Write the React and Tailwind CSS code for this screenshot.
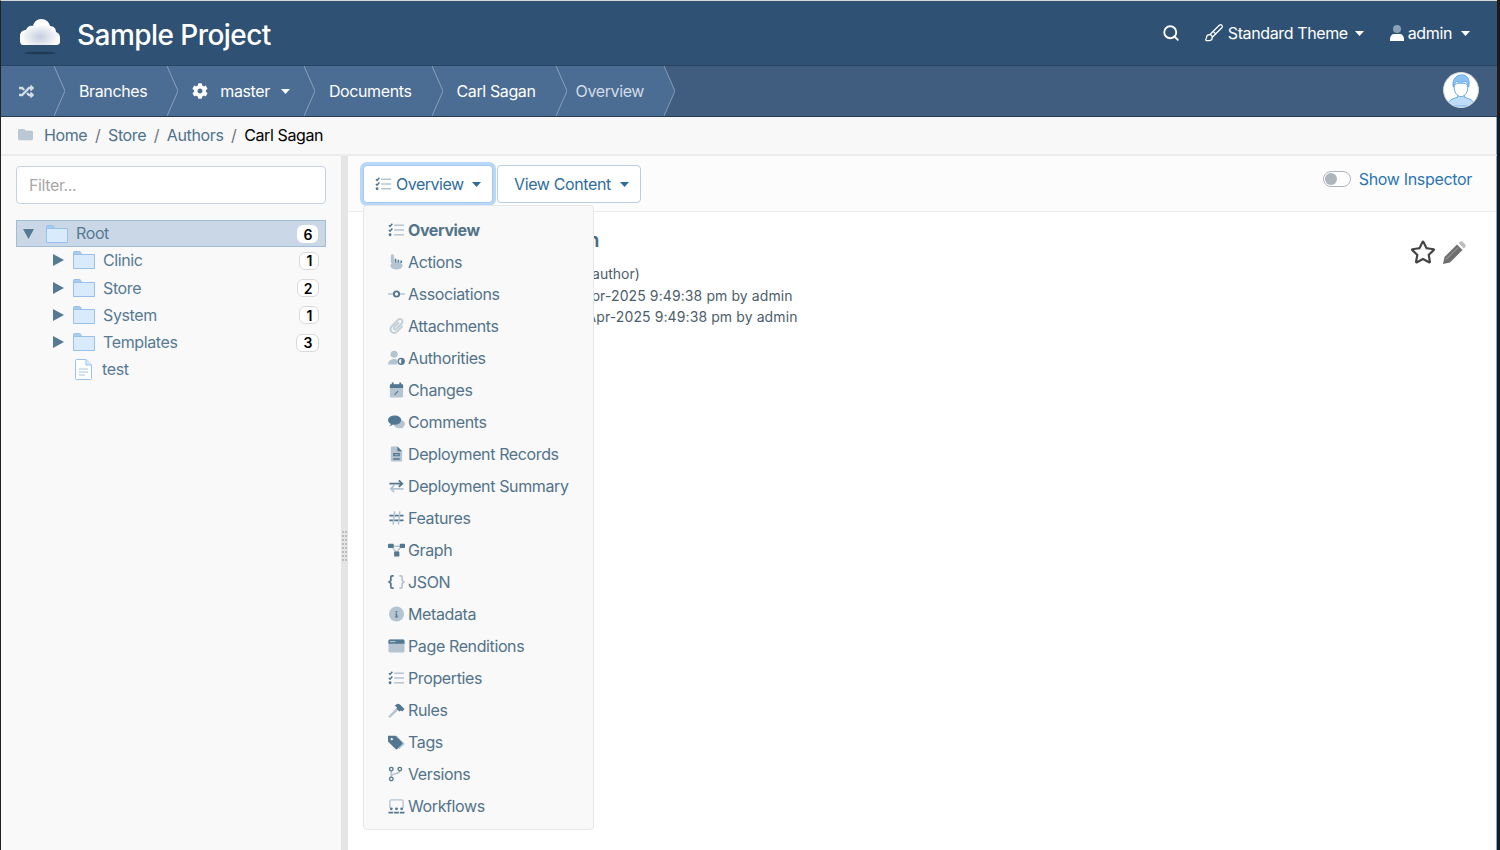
import React from 'react';
import { Search, Brush } from 'lucide-react';
import { FaRandom, FaCog, FaFolder, FaPaperclip, FaRegStar } from 'react-icons/fa';

const DARK = '#527790';
const LIGHT = '#b4c5d1';

// duotone menu icons, all on the same 18x16 box
const Duo = ({ children }) => (
    <svg viewBox="0 0 18 16" className="w-[17px] h-[16px] shrink-0" fill="none">
        {children}
    </svg>
);

const TasksIcon = () => (
    <Duo>
        <path d="M1 3l1.200 1.200L4.600 1.400M1 8l1.200 1.200 2.400-2.800" stroke={DARK} strokeWidth="1.600" />
        <circle cx="2.200" cy="13" r="1.500" fill={DARK} />
        <path d="M6.500 3H17M6.500 8H17M6.500 13H17" stroke={LIGHT} strokeWidth="1.600" />
    </Duo>
);

const icons = {
    tasks: <TasksIcon />,
    actions: (
        <Duo>
            <path d="M3 1.500c0-1.800 3.500-1.800 3.500 0V9H3z" fill={LIGHT} />
            <ellipse cx="9" cy="12" rx="6.500" ry="4" fill={LIGHT} />
            <path d="M8 4.500v4M11 5.500v3M14 6.500v2.500" stroke={DARK} strokeWidth="1.700" />
        </Duo>
    ),
    associations: (
        <Duo>
            <path d="M0 8h5.500M12.500 8H18" stroke={LIGHT} strokeWidth="1.600" />
            <circle cx="9" cy="8" r="2.800" stroke={DARK} strokeWidth="2" />
        </Duo>
    ),
    attachments: <FaPaperclip className="w-[17px] h-[16px] shrink-0 text-[#c3d0da]" />,
    authorities: (
        <Duo>
            <circle cx="6.500" cy="4" r="3.800" fill={LIGHT} />
            <path d="M0 15c0-3.500 2.500-6 6.500-6 1.500 0 2.700.4 3.500 1v5z" fill={LIGHT} />
            <circle cx="14" cy="11.500" r="3.200" stroke={DARK} strokeWidth="1.300" />
            <path d="M14 8.300a3.200 3.200 0 0 1 0 6.400z" fill={DARK} />
        </Duo>
    ),
    changes: (
        <Duo>
            <rect x="2" y="2" width="14" height="14" rx="1.500" fill={LIGHT} />
            <path d="M2 6V3.500C2 2.500 2.700 2 3.500 2h11c.8 0 1.500.5 1.500 1.500V6z" fill={DARK} />
            <path d="M5 0v3M13 0v3" stroke={DARK} strokeWidth="2" />
            <path d="M6.500 13.500l1-.3 3.500-3.500-.8-.8-3.500 3.500z" fill={DARK} />
        </Duo>
    ),
    comments: (
        <Duo>
            <ellipse cx="12" cy="10" rx="6" ry="4.500" fill={LIGHT} />
            <path d="M15 15.500l-2-2 3-1z" fill={LIGHT} />
            <ellipse cx="7" cy="6" rx="7" ry="5" fill={DARK} />
            <path d="M1.500 12.500l2-3 2 1.500z" fill={DARK} />
        </Duo>
    ),
    records: (
        <Duo>
            <path d="M3 1.500c0-.8.5-1.500 1.500-1.500H10l5 5v9.500c0 1-.6 1.500-1.500 1.500h-9C3.500 16 3 15.500 3 14.500z" fill={LIGHT} />
            <path d="M10 0l5 5h-5zM5.500 7h7v3.500h-7zM5.500 12.500h7V14h-7z" fill={DARK} />
            <rect x="7" y="8.300" width="4" height="1" fill={LIGHT} />
        </Duo>
    ),
    summary: (
        <Duo>
            <path d="M1.500 5.500H15M11.500 2L15 5.500 11.500 9" stroke={DARK} strokeWidth="2" />
            <path d="M16.500 11H3M6.500 7.500L3 11l3.500 3.500" stroke={LIGHT} strokeWidth="2" />
        </Duo>
    ),
    features: (
        <Duo>
            <path d="M1.500 5.500h15M1.500 10.500h15" stroke={DARK} strokeWidth="1.700" />
            <path d="M7 1L5.500 15M12.500 1L11 15" stroke={LIGHT} strokeWidth="1.700" />
        </Duo>
    ),
    graph: (
        <Duo>
            <path d="M4 4h10M4 4l5 7M14 4l-5 7" stroke={LIGHT} strokeWidth="1.500" />
            <rect x="0" y="1.500" width="6" height="4.500" rx=".8" fill={DARK} />
            <rect x="12.500" y="1.500" width="5.500" height="4.500" rx=".8" fill={DARK} />
            <rect x="6.500" y="9.500" width="5.500" height="5.500" rx=".5" fill={DARK} />
        </Duo>
    ),
    json: (
        <Duo>
            <path d="M6 1.500H4.500C3.500 1.500 3 2 3 3V6.500L1 8l2 1.500V13c0 1 .5 1.500 1.500 1.500H6" stroke={DARK} strokeWidth="1.800" />
            <path d="M12 1.500h1.500c1 0 1.500.5 1.500 1.500V6.500L17 8l-2 1.500V13c0 1-.5 1.500-1.500 1.500H12" stroke={LIGHT} strokeWidth="1.800" />
        </Duo>
    ),
    metadata: (
        <Duo>
            <circle cx="9" cy="8" r="8" fill={LIGHT} />
            <path d="M8 4.800h1.800v1.600H8zM7.500 7.500h2.300v3.200h.9v1.100H7.400v-1.100h.9V8.600h-.8z" fill={DARK} />
        </Duo>
    ),
    renditions: (
        <Duo>
            <rect x="0.500" y="1" width="17" height="14" rx="1.800" fill={LIGHT} />
            <path d="M.5 5.500V2.800C.5 1.700 1.200 1 2.300 1h13.400c1.100 0 1.800.7 1.800 1.800v2.700z" fill={DARK} />
            <rect x="2" y="2.700" width="6" height="1.200" fill={LIGHT} />
        </Duo>
    ),
    rules: (
        <Duo>
            <path d="M.5 14.500l8.500-8.500 2 2-8.500 8c-1 .5-2.500-.5-2-1.500z" fill={LIGHT} />
            <path d="M7 3.500L10 1.500c2 0 3.500 1 4.500 2.500l3 3-2.500 2.500-1.500-1-1.500 1-3-3 .5-1.500z" fill={DARK} />
        </Duo>
    ),
    tags: (
        <Duo>
            <path d="M9 1.500l8 7.500c.6.6.6 1.200 0 1.800l-5 4.700-1-1 4.500-4.500-8-8z" fill={LIGHT} />
            <path d="M0 1.500h8l7 7c.6.6.6 1.400 0 2l-5 5c-.6.6-1.400.6-2 0l-8-8z" fill={DARK} />
            <circle cx="4" cy="5" r="1.200" fill="#f9f9f9" />
        </Duo>
    ),
    versions: (
        <Duo>
            <path d="M3.500 4.500v7M12.500 4.500c0 4-9 2.500-9 6" stroke={LIGHT} strokeWidth="1.800" />
            <circle cx="3.500" cy="2.800" r="1.900" stroke={DARK} strokeWidth="1.400" />
            <circle cx="12.500" cy="2.800" r="1.900" stroke={DARK} strokeWidth="1.400" />
            <circle cx="3.500" cy="13.200" r="1.900" stroke={DARK} strokeWidth="1.400" />
        </Duo>
    ),
    workflows: (
        <Duo>
            <path d="M2 10V3c0-1 .6-1.500 1.500-1.500h11c.9 0 1.500.5 1.500 1.500v7" stroke={LIGHT} strokeWidth="1.500" />
            <circle cx="3.500" cy="11" r="1.500" fill={DARK} />
            <circle cx="9" cy="11" r="1.500" fill={DARK} />
            <circle cx="14.500" cy="11" r="1.500" fill={DARK} />
            <path d="M.5 15h5M6.500 15h5M12.500 15h5" stroke={DARK} strokeWidth="2" />
        </Duo>
    ),
};

const menuItems = [
    ['Overview', 'tasks'],
    ['Actions', 'actions'],
    ['Associations', 'associations'],
    ['Attachments', 'attachments'],
    ['Authorities', 'authorities'],
    ['Changes', 'changes'],
    ['Comments', 'comments'],
    ['Deployment Records', 'records'],
    ['Deployment Summary', 'summary'],
    ['Features', 'features'],
    ['Graph', 'graph'],
    ['JSON', 'json'],
    ['Metadata', 'metadata'],
    ['Page Renditions', 'renditions'],
    ['Properties', 'tasks'],
    ['Rules', 'rules'],
    ['Tags', 'tags'],
    ['Versions', 'versions'],
    ['Workflows', 'workflows'],
];

const treeRows = [
    ['Clinic', 1],
    ['Store', 2],
    ['System', 1],
    ['Templates', 3],
];

const Caret = ({ className }) => (
    <svg viewBox="0 0 9 5" className={`w-[9px] h-[5px] shrink-0 ${className}`} fill="currentColor">
        <path d="M0 0h9L4.500 5z" />
    </svg>
);

// separator between crumbs, the last one closes the lighter band
const Chevron = ({ last }) => (
    <svg viewBox="0 0 11 50" className={`w-[11px] h-[50px] shrink-0 ${last ? '' : 'bg-[#4b6d94]'}`} fill="none">
        {last && <path d="M0 0L11 25L0 50z" fill="#4b6d94" />}
        <path d="M0 0L11 25L0 50" stroke="rgba(255,255,255,0.35)" strokeWidth="1" />
    </svg>
);

const Logo = () => (
    <svg viewBox="0 0 40 36" className="w-[40px] h-[36px] shrink-0">
        <defs>
            <radialGradient id="cloudShade" cx="50%" cy="68%" r="50%">
                <stop offset="0%" stopColor="#c3cedd" />
                <stop offset="100%" stopColor="#ffffff" />
            </radialGradient>
        </defs>
        <path d="M3 26C1 26 0 24 0 22V17C0 13 3 11 6 11C7 8 10 6 13 7C14 3 17 0 21 0C26 0 29 3 30 7C34 7 36 10 36 13C39 14 40 16 40 19V23C40 25 38 26 37 26Z" fill="url(#cloudShade)" />
        <ellipse cx="20" cy="34" rx="16" ry="1.300" fill="#1c2f44" opacity="0.7" />
    </svg>
);

const Avatar = () => (
    <div className="w-9 h-9 rounded-full bg-white border border-gray-300 overflow-hidden">
        <svg viewBox="0 0 36 36" className="w-full h-full" fill="none" stroke="#5ea5e8" strokeWidth="1">
            <path d="M4 35c0-6 5-8 10-9l1-3h6l1 3c5 1 10 3 10 9z" fill="#bfdcf7" />
            <path d="M11 13c-1 7 3 12 7 12s8-5 7-12c-1-3-13-3-14 0z" fill="#ffffff" />
            <path d="M10 15C8 8 12 2 19 2c6 0 9 6 7 13-1-4-2-5-3-6-3 1-8 1-10 0-1 1-2 3-3 6z" fill="#8cc2f2" />
        </svg>
    </div>
);

const Folder = () => (
    <svg viewBox="0 0 22 18" className="w-[22px] h-[18px] shrink-0">
        <path d="M.5 17.500V3.500h21v14z" fill="#d8eafb" stroke="#97c0ea" />
        <path d="M.5 3.500V1.500c0-.6.4-1 1-1h5c.6 0 1 .4 1.200 1l.8 2z" fill="#a9cdf2" stroke="#97c0ea" />
    </svg>
);

const FileIcon = () => (
    <svg viewBox="0 0 17 21" className="w-[17px] h-[21px] shrink-0" fill="none" stroke="#9cc3ec">
        <path d="M.5 1.500c0-.6.4-1 1-1H11l5.500 5.500v13.500c0 .6-.4 1-1 1h-14c-.6 0-1-.4-1-1z" fill="#ffffff" />
        <path d="M11 .5V6h5.500" fill="#d8eafb" />
        <path d="M4 10h9M4 13h9M4 16h6" stroke="#a9c4df" />
    </svg>
);

const Badge = ({ n, selected }) => (
    <span className={`mt-[1px] px-[6px] h-[18px] flex items-center justify-center rounded-md bg-white text-black text-[14px] font-semibold ${selected ? '' : 'border border-[#d9d9d9]'}`}>
        {n}
    </span>
);

const Arrow = ({ down }) => (
    <svg viewBox="0 0 12 12" className="w-3 h-3 shrink-0" fill="#567a94">
        {down ? <path d="M0 1h11L5.500 11z" /> : <path d="M1 0l11 6-11 6z" />}
    </svg>
);

const App = () => {
    return (
        <div className="w-[1500px] h-[850px] overflow-hidden flex bg-[#1d1a17] font-[family-name:Inter,sans-serif] text-[16px] tracking-[-0.38px]">
            <div className="w-[1497px] h-full flex flex-col border-l border-[#222] border-t border-t-[#d8d8d8] bg-white relative">
                {/* Top header */}
                <header className="h-[65px] shrink-0 bg-[#2f5274] flex items-center justify-between text-white border-b border-[#274665]">
                    <div className="flex items-center pl-[19px]">
                        <div className="mt-[7px]"><Logo /></div>
                        <span className="ml-[17px] mt-[3px] text-[28px] font-[450] tracking-[-0.55px]">Sample Project</span>
                    </div>
                    <div className="flex items-center pr-[27px]">
                        <Search className="w-[18px] h-[18px]" strokeWidth={2.5} />
                        <Brush className="w-[20px] h-[20px] ml-[24px]" strokeWidth={1.5} />
                        <span className="ml-[4px]">Standard Theme</span>
                        <Caret className="ml-[7px]" />
                        <svg viewBox="0 0 16 16" className="w-[16px] h-[16px] ml-[25px]">
                            <circle cx="8" cy="4" r="4" fill="#8ba0b6" />
                            <path d="M1 16v-2c0-3 2-5 4-5h6c2 0 4 2 4 5v2z" fill="#ffffff" />
                        </svg>
                        <span className="ml-[3px]">admin</span>
                        <Caret className="ml-[9px]" />
                    </div>
                </header>

                {/* Breadcrumb bar */}
                <nav className="h-[51px] shrink-0 bg-[#405d7f] flex items-start justify-between text-white border-b border-[#243c55]">
                    <div className="flex h-[50px] items-center">
                        <div className="h-full bg-[#4b6d94] flex items-center pl-[17px] w-[53px]">
                            <FaRandom className="w-[17px] h-[15px] text-[#d4dde8]" />
                        </div>
                        <Chevron />
                        <div className="h-full bg-[#4b6d94] flex items-center pl-[14px] pr-[20px]">Branches</div>
                        <Chevron />
                        <div className="h-full bg-[#4b6d94] flex items-center pl-[14px] pr-[14px]">
                            <FaCog className="w-[16px] h-[16px]" />
                            <span className="ml-[12px]">master</span>
                            <Caret className="ml-[11px]" />
                        </div>
                        <Chevron />
                        <div className="h-full bg-[#4b6d94] flex items-center pl-[14px] pr-[20px]">Documents</div>
                        <Chevron />
                        <div className="h-full bg-[#4b6d94] flex items-center pl-[14px] pr-[20px]">Carl Sagan</div>
                        <Chevron />
                        <div className="h-full bg-[#4b6d94] flex items-center pl-[9px] pr-[20px] text-[#d2dbe6]">Overview</div>
                        <Chevron last />
                    </div>
                    <div className="pr-[18px] pt-[6px]">
                        <Avatar />
                    </div>
                </nav>

                {/* Folder path */}
                <div className="h-[39px] shrink-0 bg-[#f8f8f8] flex items-center pl-[16px] pb-[2px] border-b-2 border-r border-b-[#ececec] border-r-[#5bb5f0]">
                    <FaFolder className="w-[17px] h-[15px] text-[#b9c8d3]" />
                    <span className="ml-[10px] text-[#4f7289]">Home</span>
                    <span className="mx-[7.67px] text-[#6c757d]">/</span>
                    <span className="text-[#4f7289]">Store</span>
                    <span className="mx-[7.67px] text-[#6c757d]">/</span>
                    <span className="text-[#4f7289]">Authors</span>
                    <span className="mx-[7.67px] text-[#6c757d]">/</span>
                    <span className="text-black">Carl Sagan</span>
                </div>

                <div className="flex-1 flex min-h-0 border-r border-[#5bb5f0]">
                    {/* Sidebar */}
                    <aside className="w-[340px] shrink-0 bg-[#f9f9f9] pl-[15px] pr-[15px] pt-[10px]">
                        <input
                            placeholder="Filter..."
                            className="w-full h-[38px] px-3 bg-white border border-[#c5d3e0] rounded-[4px] placeholder:text-[#a8a8a8] outline-none"
                        />
                        <div className="mt-[16px] h-[27px] bg-[#cad7e6] border border-[#a3bcd6] flex items-center pl-[6px] pr-[7px] text-[#567a94]">
                            <Arrow down />
                            <span className="ml-[11px]"><Folder /></span>
                            <span className="ml-[8px] flex-1 -mt-[1px]">Root</span>
                            <Badge n={6} selected />
                        </div>
                        <div className="-mt-[0.3px]">
                            {treeRows.map(([name, n]) => (
                                <div key={name} className="h-[27.25px] flex items-center pl-[36px] pr-[7px] text-[#567a94]">
                                    <Arrow />
                                    <span className="ml-[9px]"><Folder /></span>
                                    <span className="ml-[8px] flex-1">{name}</span>
                                    <Badge n={n} />
                                </div>
                            ))}
                            <div className="h-[27.25px] flex items-center pl-[59px] text-[#567a94]">
                                <FileIcon />
                                <span className="ml-[10px]">test</span>
                            </div>
                        </div>
                    </aside>

                    {/* Splitter */}
                    <div className="w-[7px] shrink-0 bg-[#e5e5e5] flex flex-col items-center justify-center gap-[2px] pt-[86px]">
                        {[0, 1, 2, 3, 4, 5, 6, 7].map((i) => (
                            <div key={i} className="flex gap-[1px]">
                                <span className="w-[2px] h-[2px] bg-[#bdbdbd]" />
                                <span className="w-[2px] h-[2px] bg-[#bdbdbd]" />
                            </div>
                        ))}
                    </div>

                    {/* Main column */}
                    <main className="flex-1 min-w-0 flex flex-col relative">
                        <div className="h-[56px] shrink-0 bg-[#fcfcfc] border-b border-[#ececec] flex items-start justify-between pl-[15px] pr-[24px] pt-[9px]">
                            <div className="flex items-center gap-[4px]">
                                <button className="h-[38px] w-[130px] flex items-center pl-[11px] bg-white rounded-[4px] border border-[#a5c9f0] ring-3 ring-[#b9d7f6] text-[#2f6c9c]">
                                    <TasksIcon />
                                    <span className="ml-[4px] tracking-[-0.5px]">Overview</span>
                                    <Caret className="ml-[8px]" />
                                </button>
                                <button className="h-[38px] w-[144px] flex items-center pl-[16px] bg-white rounded-[4px] border border-[#b9cde0] text-[#2f6c9c]">
                                    <span>View Content</span>
                                    <Caret className="ml-[9px]" />
                                </button>
                            </div>
                            <div className="flex items-center mt-[2px]">
                                <span className="w-[28px] h-[16px] rounded-full border border-[#adb5bd] bg-white flex items-center pl-[1px]">
                                    <span className="w-[12px] h-[12px] rounded-full bg-[#adb5bd]" />
                                </span>
                                <span className="ml-[8px] text-[#2a75b3] tracking-[-0.32px]">Show Inspector</span>
                            </div>
                        </div>

                        <div className="flex-1 flex justify-between pr-[30px] pt-[16px] text-[#4d5e6b] tracking-normal">
                            <div className="pl-[146px]">
                                <div className="text-[20px] font-semibold text-[#4a6b82] leading-[26px] -mt-[1px]">Carl Sagan</div>
                                <div className="mt-[10px] text-[14px] leading-[22px] pl-[93px]">(author)</div>
                                <div className="text-[14px] leading-[21px] tracking-[0.1px] pl-[7px]">Created 22-Apr-2025 9:49:38 pm by admin</div>
                                <div className="text-[14px] leading-[21px] tracking-[0.1px] pl-[6px]">Modified 22-Apr-2025 9:49:38 pm by admin</div>
                            </div>
                            <div className="flex items-start gap-[7px] pt-[12px]">
                                <FaRegStar className="w-[26px] h-[24px] text-[#444]" />
                                <svg viewBox="0 0 24 24" className="w-[24px] h-[24px] -ml-[1px] mt-[1px]">
                                    <path d="M1 23l1.500-7L15 3.500l5.500 5.500L8 21.500z" fill="#6f6f6f" />
                                    <path d="M4 18.500L16 6.500" stroke="#ffffff" strokeOpacity="0.4" strokeWidth="1" />
                                    <path d="M16.500 2l2-1.500c.5-.4 1.200-.4 1.700 0l3.300 3.300c.4.500.4 1.200 0 1.700L22 7.500z" fill="#bdbdbd" />
                                </svg>
                            </div>
                        </div>

                        {/* Open dropdown menu */}
                        <div className="absolute left-[15px] top-[49px] w-[231px] h-[625px] pt-[8px] pl-[24px] bg-[#f9f9f9] border border-[#e6e6e6] rounded-[4px] text-[#527389]">
                            {menuItems.map(([label, icon], i) => (
                                <div key={label} className="h-[32px] flex items-center">
                                    {icons[icon]}
                                    <span className={`ml-[3px] ${i === 0 ? 'font-bold' : ''}`}>{label}</span>
                                </div>
                            ))}
                        </div>
                    </main>
                </div>
            </div>
            <div className="w-[3px] h-full bg-[#1d1a17]" />
        </div>
    );
};

export default App;
